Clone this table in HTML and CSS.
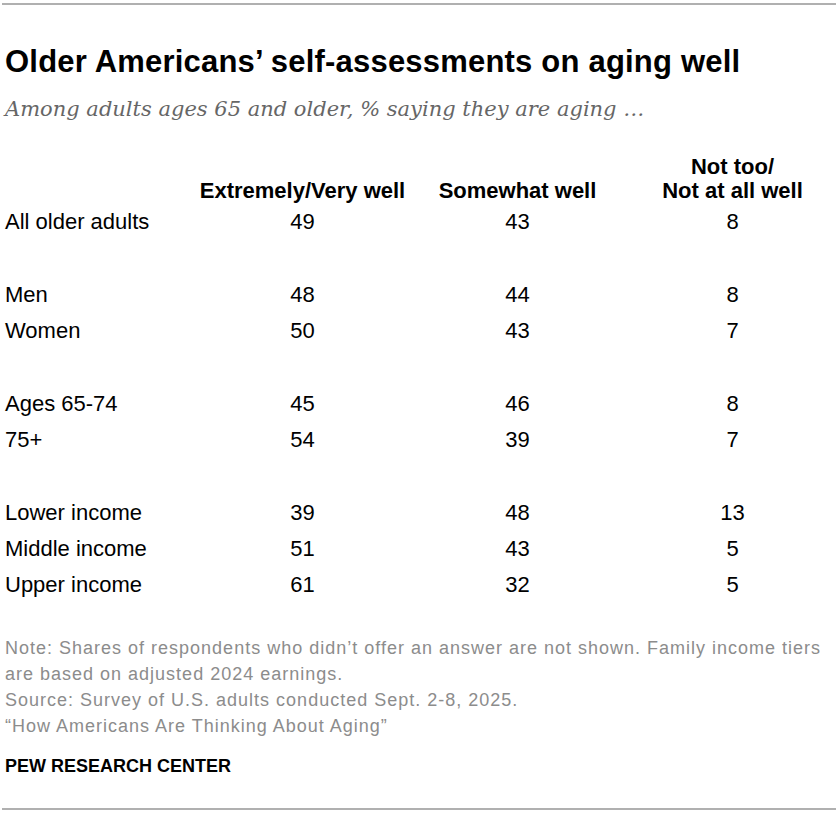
FILE: index.html
```html
<!DOCTYPE html>
<html lang="en">
<head>
<meta charset="utf-8">
<title>Older Americans’ self-assessments on aging well</title>
<link rel="stylesheet" href="styles.css">
</head>
<body>
<div class="chart">
  <div class="rule rule-top"></div>
  <h1 class="title">Older Americans’ self-assessments on aging well</h1>
  <p class="subtitle">Among adults ages 65 and older, % saying they are aging …</p>

  <div class="table">
    <div class="row head">
      <div class="label"></div>
      <div class="cell">Extremely/Very well</div>
      <div class="cell">Somewhat well</div>
      <div class="cell">Not too/<br>Not at all well</div>
    </div>

    <div class="group">
      <div class="row"><div class="label">All older adults</div><div class="cell">49</div><div class="cell">43</div><div class="cell">8</div></div>
    </div>

    <div class="group">
      <div class="row"><div class="label">Men</div><div class="cell">48</div><div class="cell">44</div><div class="cell">8</div></div>
      <div class="row"><div class="label">Women</div><div class="cell">50</div><div class="cell">43</div><div class="cell">7</div></div>
    </div>

    <div class="group">
      <div class="row"><div class="label">Ages 65-74</div><div class="cell">45</div><div class="cell">46</div><div class="cell">8</div></div>
      <div class="row"><div class="label">75+</div><div class="cell">54</div><div class="cell">39</div><div class="cell">7</div></div>
    </div>

    <div class="group">
      <div class="row"><div class="label">Lower income</div><div class="cell">39</div><div class="cell">48</div><div class="cell">13</div></div>
      <div class="row"><div class="label">Middle income</div><div class="cell">51</div><div class="cell">43</div><div class="cell">5</div></div>
      <div class="row"><div class="label">Upper income</div><div class="cell">61</div><div class="cell">32</div><div class="cell">5</div></div>
    </div>
  </div>

  <div class="notes">
    <p>Note: Shares of respondents who didn’t offer an answer are not shown. Family income tiers are based on adjusted 2024 earnings.</p>
    <p>Source: Survey of U.S. adults conducted Sept. 2-8, 2025.</p>
    <p>“How Americans Are Thinking About Aging”</p>
  </div>

  <div class="brand">PEW RESEARCH CENTER</div>
  <div class="rule rule-bottom"></div>
</div>
</body>
</html>
```

FILE: styles.css
```css
html, body {
  margin: 0;
  padding: 0;
  background: #ffffff;
}

.chart {
  width: 840px;
  font-family: "Liberation Sans", Arial, sans-serif;
  color: #000000;
}

.rule {
  height: 0;
  border-top: 2px solid #b0b0b0;
  margin-left: 2px;
  margin-right: 4px;
}

.rule-top {
  margin-top: 3px;
}

.title {
  margin: 39px 0 0 5px;
  font-size: 31px;
  line-height: 36px;
  font-weight: bold;
  letter-spacing: 0.2px;
}

.subtitle {
  margin: 15px 0 0 5px;
  font-family: "DejaVu Serif", Georgia, serif;
  font-style: italic;
  font-size: 21px;
  line-height: 28px;
  color: #666666;
}

.table {
  margin-top: 32px;
  padding-left: 5px;
  font-size: 22px;
}

.row {
  display: grid;
  grid-template-columns: 190px 215px 215px 215px;
  line-height: 36px;
}

.row.head {
  font-weight: bold;
  line-height: 24px;
  align-items: end;
  margin-bottom: 1px;
}

.cell {
  text-align: center;
  white-space: nowrap;
}

.label {
  white-space: nowrap;
}

.group + .group {
  margin-top: 37px;
}

.notes {
  margin: 32px 0 0 5px;
  width: 828px;
  font-size: 18px;
  line-height: 26px;
  letter-spacing: 1px;
  color: #8c8c8c;
}

.notes p {
  margin: 0;
}

.brand {
  margin: 16px 0 0 5px;
  font-size: 18px;
  line-height: 22px;
  font-weight: bold;
}

.rule-bottom {
  margin-top: 31px;
}
```
